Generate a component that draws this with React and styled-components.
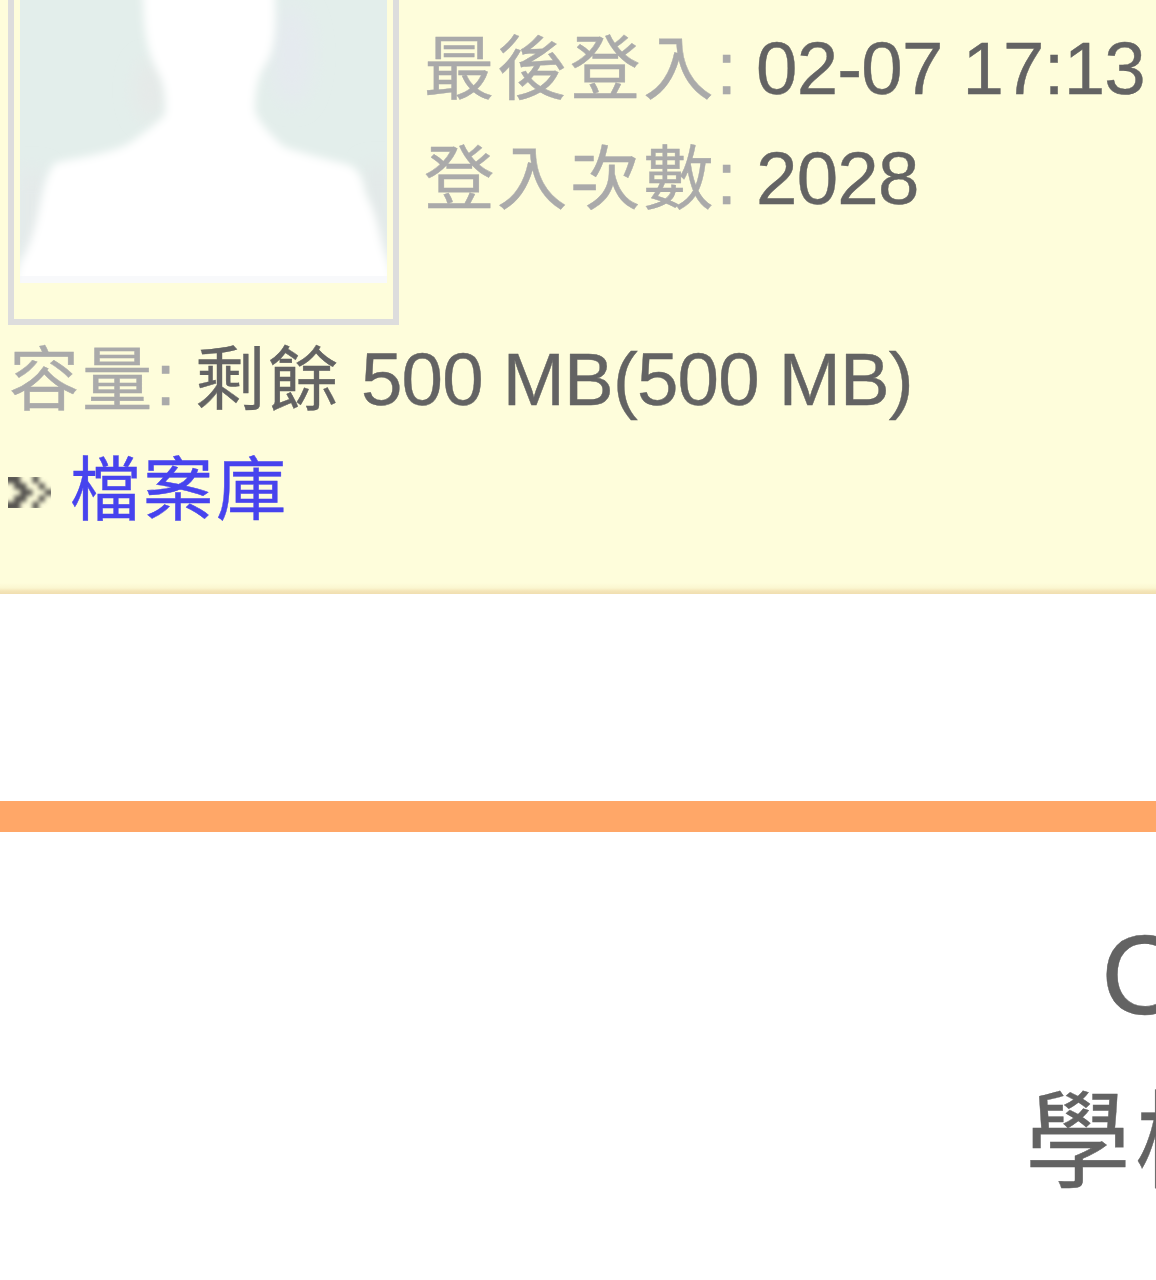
import React from 'react';
import styled, { createGlobalStyle } from 'styled-components';

const GlobalStyle = createGlobalStyle`
  body {
    margin: 0;
    background: #ffffff;
    overflow: hidden;
  }
`;

const Page = styled.div`
  width: 100%;
  height: 1280px;
  overflow: hidden;
  background: #ffffff;
  color: #636363;
  font-family: 'Liberation Sans', 'Noto Sans CJK TC', sans-serif;
  font-size: 74.5px;
  font-kerning: none;
  letter-spacing: -0.8px;
  line-height: 110px;
  -webkit-text-stroke: 0.4px currentColor;
`;

const ProfilePanel = styled.section`
  box-sizing: border-box;
  height: 594px;
  padding-left: 8px;
  background: linear-gradient(to top, #f0deb0 0, #f4e5b8 3px, #fbf6d0 6px, #fefddb 11px);
`;

const UserRow = styled.div`
  display: flex;
  gap: 25px;
  height: 325px;
`;

const AvatarFrame = styled.div`
  box-sizing: border-box;
  flex: none;
  width: 391px;
  height: 325px;
  padding: 0 6px;
  border: 6px solid #dddddd;
  border-top: none;

  svg {
    display: block;
  }
`;

const Details = styled.div`
  padding-top: 14px;
`;

const Line = styled.div`
  height: 110px;
  padding-left: ${props => props.$indent || 0}px;
  white-space: pre;
`;

const LinkLine = styled(Line)`
  display: flex;
  align-items: center;

  svg {
    margin-top: 5px;
  }
`;

const Label = styled.span`
  color: #aaaaaa;
`;

// Chinese glyphs sit a little smaller than the latin text around them
const Han = styled.span`
  font-size: 0.944em;
  letter-spacing: 0.039em;
`;

const FileLink = styled.a`
  margin-left: 19px;
  color: #4743ee;
  text-decoration: none;
`;

const Footer = styled.footer`
  margin-top: 207px;
  padding-top: 61px;
  border-top: 31px solid #ffa768;
  line-height: 165px;
`;

const FooterLine = styled.div`
  height: 165px;
  padding-left: ${props => props.$indent}px;
  font-size: ${props => props.$size}px;
  white-space: nowrap;
`;

function Avatar() {
  return (
    <svg width="367" height="283" viewBox="20 0 367 283">
      <defs>
        <filter id="soft" x="-10%" y="-10%" width="120%" height="120%">
          <feGaussianBlur stdDeviation="4" />
        </filter>
        <filter id="tint" x="-50%" y="-50%" width="200%" height="200%">
          <feGaussianBlur stdDeviation="10" />
        </filter>
      </defs>
      <rect x="20" y="0" width="367" height="283" fill="#e3eeeb" />
      <g filter="url(#tint)">
        <ellipse cx="292" cy="55" rx="20" ry="50" fill="#e5eaef" />
        <ellipse cx="150" cy="90" rx="14" ry="30" fill="#e6e9e8" />
        <rect x="20" y="170" width="24" height="90" fill="#e5e9ea" />
        <rect x="366" y="165" width="24" height="95" fill="#e3e8e8" />
      </g>
      <path
        filter="url(#soft)"
        fill="#ffffff"
        d="M142 -20 L144 20 C146 45 151 60 158 72 C165 85 166 100 165 115 C158 122 143 134 128 144 C110 154 75 158 55 163 C45 175 42 195 38 215 C33 236 27 252 20 262 L10 300 H400 L387 258 C381 245 378 215 366 195 C362 178 360 169 346 164 C320 158 300 152 284 147 C272 136 260 124 255 112 C254 95 258 75 265 65 C275 50 277 30 274 -20 Z"
      />
      <rect x="20" y="276" width="367" height="7" fill="#f4f5f8" opacity="0.6" />
    </svg>
  );
}

function ArrowIcon() {
  return (
    <svg width="43" height="31" viewBox="0 0 7 5" preserveAspectRatio="none">
      <defs>
        <filter id="pixel" x="-0.1" y="-0.1" width="1.2" height="1.2">
          <feGaussianBlur stdDeviation="0.32" />
        </filter>
      </defs>
      <g filter="url(#pixel)">
        <path fill="#55534f" d="M-1 -0.5 H2 V1 H3 V2 H4 V3 H3 V4 H2 V5.5 H-1 V4 H1 V3 H2 V2 H1 V1 H-1 Z" />
        <path fill="#55534f" d="M4 -0.4 H5 V1 H6 V2 H7.6 V3 H6 V4 H5 V5.4 H4 V4 H5 V3 H6 V2 H5 V1 H4 Z" />
      </g>
    </svg>
  );
}

const App = () => {
  return (
    <Page>
      <GlobalStyle />
      <ProfilePanel>
        <UserRow>
          <AvatarFrame>
            <Avatar />
          </AvatarFrame>
          <Details>
            <Line><Label><Han>最後登入</Han>:</Label> 02-07 17:13</Line>
            <Line><Label><Han>登入次數</Han>:</Label> 2028</Line>
          </Details>
        </UserRow>
        <Line $indent={1}><Label><Han>容量</Han>:</Label> <Han>剩餘</Han> 500 MB(500 MB)</Line>
        <LinkLine>
          <ArrowIcon />
          <FileLink><Han>檔案庫</Han></FileLink>
        </LinkLine>
      </ProfilePanel>

      <Footer>
        <FooterLine $indent={1101} $size={113}>C</FooterLine>
        <FooterLine $indent={1025} $size={112}><Han>學校</Han></FooterLine>
      </Footer>
    </Page>
  );
};

export default App;
